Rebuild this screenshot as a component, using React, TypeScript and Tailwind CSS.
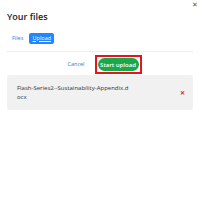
import { useState } from "react";

type UploadFile = {
  id: string;
  name: string;
};

const initialFiles: UploadFile[] = [
  { id: "1", name: "Flash-Series2--Sustainability-Appendix.docx" },
];

export default function App() {
  const [tab, setTab] = useState<"files" | "upload">("upload");
  const [files, setFiles] = useState<UploadFile[]>(initialFiles);

  return (
    <div className="relative w-[200px] h-[221px] bg-white font-['Open_Sans',sans-serif] text-[#222]">
      <button className="absolute top-[1px] right-[2px] text-[7px] leading-none text-[#555]">
        ✕
      </button>

      <h1 className="pl-[7px] pt-[10px] text-[9px] leading-[14px] font-semibold">
        Your files
      </h1>

      <div className="flex items-center gap-[6px] pl-[12px] mt-[9px]">
        <button
          onClick={() => setTab("files")}
          className="text-[5.5px] leading-none text-[#2a7de1]"
        >
          Files
        </button>
        <button
          onClick={() => setTab("upload")}
          className={`h-[11px] w-[25px] rounded-[2px] text-[5.5px] leading-none underline ${
            tab === "upload" ? "bg-[#1f87ff] text-white" : "text-[#2a7de1]"
          }`}
        >
          Upload
        </button>
      </div>

      <div className="mx-[7px] mt-[7px] border-t border-[#eee]" />

      <div className="flex items-center justify-center gap-[10px] mt-[3px] pl-[9px]">
        <button className="text-[5.5px] leading-none text-[#2a7de1]">Cancel</button>
        <span className="border-2 border-[#e8141c] p-[1px]">
          <button className="block h-[13px] w-[41px] rounded-full bg-[#1aa84a] text-white text-[6px] font-semibold leading-none">
            Start upload
          </button>
        </span>
      </div>

      <div className="mx-[7px] mt-[1px] h-[35px] rounded-[3px] bg-[#f1f1f1] flex items-center pl-[10px] pr-[8px]">
        <div className="flex-1">
          {files.map((f) => (
            <p
              key={f.id}
              className="w-[114px] break-all text-[6px] leading-[9px] text-[#333]"
            >
              {f.name}
            </p>
          ))}
        </div>
        <button
          onClick={() => setFiles([])}
          className="text-[6px] leading-none text-[#e8141c] font-bold"
        >
          ✕
        </button>
      </div>
    </div>
  );
}
